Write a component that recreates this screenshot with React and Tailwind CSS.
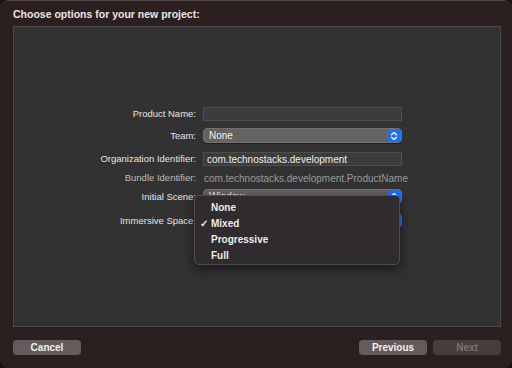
import React from 'react';

const font = { fontFamily: '"Liberation Sans", Arial, sans-serif' };

const Chevrons = () => (
  <div className="w-[14px] h-[13px] rounded-[3px] bg-[#1f6ff0] flex items-center justify-center">
    <svg width="8" height="10" viewBox="0 0 8 10" fill="none" stroke="white" strokeWidth="1.3" strokeLinecap="round" strokeLinejoin="round">
      <path d="M1.5 3.8 L4 1.5 L6.5 3.8" />
      <path d="M1.5 6.2 L4 8.5 L6.5 6.2" />
    </svg>
  </div>
);

const Popup = ({ value }) => (
  <div className="h-[15px] w-[199px] rounded-[4px] bg-[#656262] border border-[#727070] flex items-center justify-between pl-[5px] shadow-[0_1px_1px_rgba(0,0,0,0.4)]">
    <span className="text-[10px] text-[#f0f0f0]">{value}</span>
    <Chevrons />
  </div>
);

const Field = ({ value }) => (
  <div className="h-[14px] w-[199px] bg-[#3c3c3c] border border-[#4e4e4e] flex items-center px-[3px]">
    <span className="text-[10px] text-[#eeeeee]">{value}</span>
  </div>
);

const Row = ({ label, children, dim }) => (
  <>
    <div className={`text-[9.5px] text-right font-medium ${dim ? 'text-[#bdbdbd]' : 'text-[#e4e4e4]'} leading-none`}>{label}</div>
    <div className="flex items-center">{children}</div>
  </>
);

export default function App() {
  return (
    <div className="w-[512px] h-[368px] bg-[#1c1414]" style={font}>
      <div className="w-full h-full rounded-[9px] bg-[#2c1f1f] border-t border-[#4c4444] flex flex-col pl-[13px] pr-[11px]">
        <div className="h-[25px] flex items-center text-[10.5px] font-bold text-[#e8e6e6] pt-[2px]">
          Choose options for your new project:
        </div>

        <div className="relative h-[301px] bg-[#323232] border border-[#4a4a4a]">
          <div className="pt-[80px] grid grid-cols-[182px_199px] gap-x-[7px] items-center">
            <Row label="Product Name:"><Field value="" /></Row>
            <div className="h-[7px] col-span-2" />
            <Row label="Team:"><Popup value="None" /></Row>
            <div className="h-[9px] col-span-2" />
            <Row label="Organization Identifier:"><Field value="com.technostacks.development" /></Row>
            <div className="h-[5px] col-span-2" />
            <Row label="Bundle Identifier:" dim>
              <span className="text-[10px] text-[#9a9a9a] h-[14px] flex items-center pl-[1px]">com.technostacks.development.ProductName</span>
            </Row>
            <div className="h-[4px] col-span-2" />
            <Row label="Initial Scene:"><Popup value="Window" /></Row>
            <div className="h-[9px] col-span-2" />
            <Row label="Immersive Space:"><Popup value="" /></Row>
          </div>

          {/* open popup menu */}
          <div className="absolute left-[180px] top-[168px] w-[206px] h-[70px] rounded-[5px] bg-[#2f2b2e] border border-[#4f4b4e] shadow-[0_4px_12px_rgba(0,0,0,0.55)] pt-[3px] flex flex-col">
            {['None', 'Mixed', 'Progressive', 'Full'].map((item) => (
              <div key={item} className="h-[16px] flex items-center text-[10px] font-bold text-[#ececec]">
                <span className="w-[16px] text-right pr-[3px] text-[10px]">{item === 'Mixed' ? '✓' : ''}</span>
                <span>{item}</span>
              </div>
            ))}
          </div>
        </div>

        <div className="flex items-center justify-between mt-[13px]">
          <button className="w-[68px] h-[15px] rounded-[4px] bg-[#645b5b] text-[10px] font-bold text-[#f2f0f0] flex items-center justify-center">
            Cancel
          </button>
          <div className="flex gap-[6px]">
            <button className="w-[68px] h-[15px] rounded-[4px] bg-[#645b5b] text-[10px] font-bold text-[#f2f0f0] flex items-center justify-center">
              Previous
            </button>
            <button className="w-[68px] h-[15px] rounded-[4px] bg-[#473d3d] text-[10px] font-bold text-[#7d7474] flex items-center justify-center">
              Next
            </button>
          </div>
        </div>
      </div>
    </div>
  );
}
